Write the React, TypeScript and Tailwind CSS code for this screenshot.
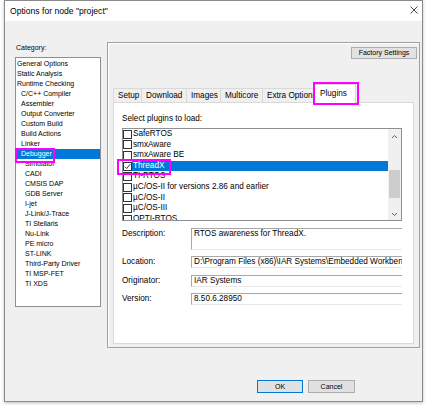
import React from "react";

const categories: [string, number][] = [
  ["General Options", 0],
  ["Static Analysis", 0],
  ["Runtime Checking", 0],
  ["C/C++ Compiler", 1],
  ["Assembler", 1],
  ["Output Converter", 1],
  ["Custom Build", 1],
  ["Build Actions", 1],
  ["Linker", 1],
  ["Debugger", 1],
  ["Simulator", 2],
  ["CADI", 2],
  ["CMSIS DAP", 2],
  ["GDB Server", 2],
  ["I-jet", 2],
  ["J-Link/J-Trace", 2],
  ["TI Stellaris", 2],
  ["Nu-Link", 2],
  ["PE micro", 2],
  ["ST-LINK", 2],
  ["Third-Party Driver", 2],
  ["TI MSP-FET", 2],
  ["TI XDS", 2],
];

const indent = ["pl-[1px]", "pl-[5px]", "pl-[9px]"];

const plugins = [
  "SafeRTOS",
  "smxAware",
  "smxAware BE",
  "ThreadX",
  "TI-RTOS",
  "µC/OS-II for versions 2.86 and earlier",
  "µC/OS-II",
  "µC/OS-III",
  "OPTI-RTOS",
];

const tabs = [
  { name: "Setup", w: "w-[29px]" },
  { name: "Download", w: "w-[46px]" },
  { name: "Images", w: "w-[35px]" },
  { name: "Multicore", w: "w-[43px]" },
  { name: "Extra Options", w: "w-[55px]" },
];

const font = { fontFamily: '"Liberation Sans", Arial, sans-serif' };

const Field = ({
  label,
  value,
  tall,
  className,
}: {
  label: string;
  value: string;
  tall?: boolean;
  className: string;
}) => (
  <div className={`flex ${className}`}>
    <div className="w-[69px] pt-px text-[8.2px] leading-[10px] text-black">
      {label}
    </div>
    <div
      className={`w-[211px] ${
        tall ? "h-[22px]" : "h-[12px]"
      } overflow-hidden whitespace-nowrap border-t border-l border-b border-t-[#a8a8a8] border-l-[#a8a8a8] border-b-[#e8e8e8] bg-white pl-[2px] text-[8.2px] leading-[10px] text-black`}
    >
      {value}
    </div>
  </div>
);

export default function App() {
  return (
    <div className="h-[406px] w-[429px] bg-white" style={font}>
      <div className="ml-[4px] flex h-[402px] w-[419px] flex-col border border-[#8a8a8a] shadow-[0_1px_3px_rgba(0,0,0,0.25)]">
        {/* title bar */}
        <div className="flex h-[20px] items-center justify-between bg-white pl-[5px] pr-[4px]">
          <span className="text-[8.6px] text-black">
            Options for node "project"
          </span>
          <svg width="8" height="8" viewBox="0 0 8 8" className="mt-[-2px]">
            <path d="M0.5 0.5 L7.5 7.5 M7.5 0.5 L0.5 7.5" stroke="#333" strokeWidth="0.9" />
          </svg>
        </div>

        <div className="flex flex-1 flex-col bg-[#f0f0f0]">
          <div className="flex items-start">
            {/* category column */}
            <div className="ml-[10px] w-[86px]">
              <div className="mt-[22px] h-[10px] pl-px text-[7px] leading-[10px] text-black">
                Category:
              </div>
              <div className="relative mt-[4px]">
                <div className="h-[250px] border border-[#8c8f96] bg-white pt-px">
                  {categories.map(([name, lvl]) => (
                    <div
                      key={name}
                      className={`h-[10px] whitespace-nowrap text-[7px] leading-[10px] ${indent[lvl]} ${
                        name === "Debugger" ? "bg-[#0078d7] text-white" : "text-black"
                      }`}
                    >
                      {name}
                    </div>
                  ))}
                </div>
                <div className="absolute left-0 top-[91px] h-[15px] w-[40px] border-2 border-[#ff00ff]" />
              </div>
            </div>

            {/* right panel */}
            <div className="ml-[6px] mt-[21px] flex h-[306px] w-[313px] flex-col border border-[#a0a0a0] shadow-[inset_1px_1px_0_#ffffff]">
              <button className="mr-[2px] mt-[4px] h-[12px] w-[66px] self-end border border-[#adadad] bg-[#e1e1e1] text-[7px] leading-[10px] text-black">
                Factory Settings
              </button>

              <div className="ml-[5px] mt-[25px] flex h-[18px] items-end">
                {tabs.map((t) => (
                  <div
                    key={t.name}
                    className={`${t.w} -mr-px h-[14px] overflow-hidden whitespace-nowrap border border-b-0 border-[#d9d9d9] bg-[#f0f0f0] pl-[4px] text-[8.2px] leading-[13px] text-black`}
                  >
                    {t.name}
                  </div>
                ))}
                <div className="relative z-10 -mb-px -ml-[2px] h-[19px] w-[42px] border border-b-0 border-[#d9d9d9] bg-white pl-[5px] pt-[2px] text-[8.2px] leading-[13px] text-black">
                  Plugins
                  <div className="absolute -bottom-[2px] -left-[2px] -right-[4px] -top-[3px] border-2 border-[#ff00ff]" />
                </div>
              </div>

              {/* tab page */}
              <div className="ml-[5px] flex h-[242px] w-[301px] flex-col border border-[#d9d9d9] bg-white pl-[8px]">
                <div className="mt-[11px] h-[10px] text-[8.2px] leading-[10px] text-black">
                  Select plugins to load:
                </div>
                <div className="relative mt-[4px] w-[280px]">
                  <div className="flex h-[93px] overflow-hidden border border-[#8c8f96] bg-white">
                    <div className="flex-1">
                      {plugins.map((p) => {
                        const sel = p === "ThreadX";
                        return (
                          <div key={p} className="flex h-[10.6px] items-center">
                            <div className="flex h-[9px] w-[9px] shrink-0 items-center justify-center border border-[#333] bg-white">
                              {sel && (
                                <svg width="7" height="7" viewBox="0 0 7 7">
                                  <path d="M0.8 3.6 L2.7 5.5 L6.3 1.2" fill="none" stroke="#222" strokeWidth="0.9" />
                                </svg>
                              )}
                            </div>
                            <div
                              className={`h-full flex-1 whitespace-nowrap pl-px text-[8.2px] leading-[10.6px] ${
                                sel ? "bg-[#0078d7] text-white" : "text-black"
                              }`}
                            >
                              {p}
                            </div>
                          </div>
                        );
                      })}
                    </div>
                    {/* scrollbar */}
                    <div className="flex w-[13px] flex-col items-center bg-[#f0f0f0]">
                      <svg width="7" height="5" viewBox="0 0 7 5" className="mt-[5px]">
                        <path d="M1 4 L3.5 1.5 L6 4" fill="none" stroke="#606060" strokeWidth="1" />
                      </svg>
                      <div className="mt-[31px] h-[28px] w-[11px] bg-[#cdcdcd]" />
                      <svg width="7" height="5" viewBox="0 0 7 5" className="mt-auto mb-[3px]">
                        <path d="M1 1 L3.5 3.5 L6 1" fill="none" stroke="#606060" strokeWidth="1" />
                      </svg>
                    </div>
                  </div>
                  <div className="absolute left-[-5px] top-[31px] h-[16px] w-[54px] border-2 border-[#ff00ff]" />
                </div>

                <Field className="mt-[7px]" label="Description:" value="RTOS awareness for ThreadX." tall />
                <Field
                  className="mt-[6px]"
                  label="Location:"
                  value={"D:\\Program Files (x86)\\IAR Systems\\Embedded Workbench 8.4\\common"}
                />
                <Field className="mt-[7px]" label="Originator:" value="IAR Systems" />
                <Field className="mt-[6px]" label="Version:" value="8.50.6.28950" />
              </div>
            </div>
          </div>

          {/* buttons */}
          <div className="mt-[32px] flex justify-end gap-[5px] pr-[67px]">
            <button className="h-[13px] w-[46px] border border-[#0078d7] bg-[#e1e1e1] text-[7px] leading-[11px] text-black">
              OK
            </button>
            <button className="h-[13px] w-[47px] border border-[#adadad] bg-[#e1e1e1] text-[7px] leading-[11px] text-black">
              Cancel
            </button>
          </div>
        </div>
      </div>
    </div>
  );
}
